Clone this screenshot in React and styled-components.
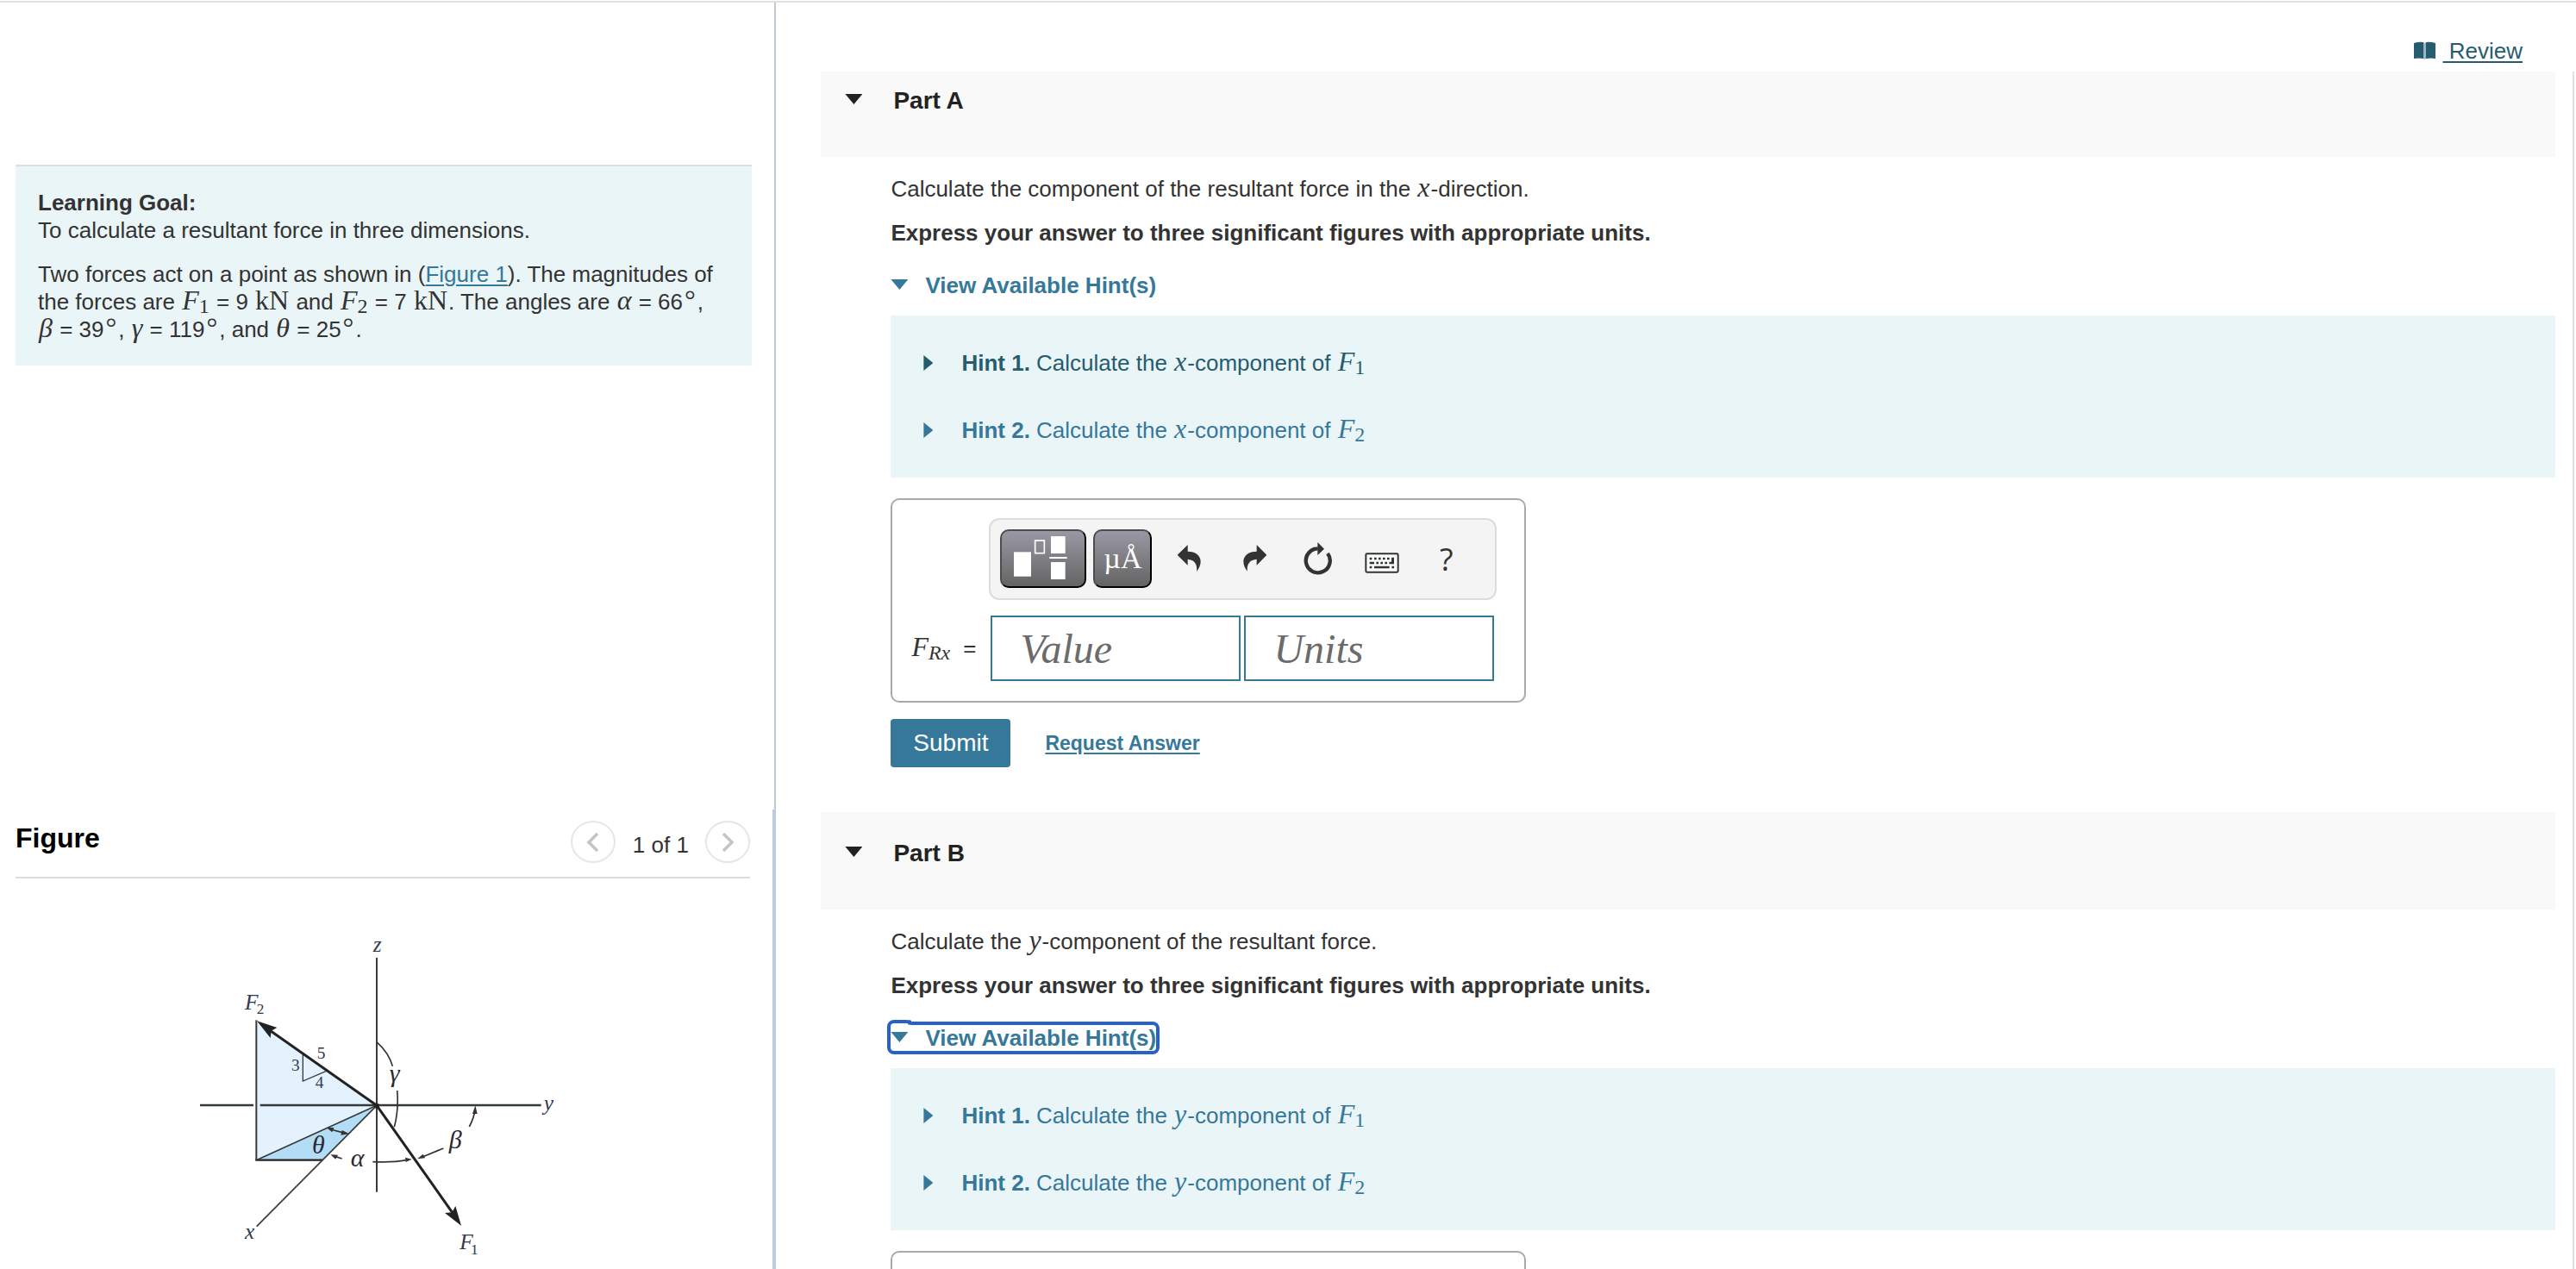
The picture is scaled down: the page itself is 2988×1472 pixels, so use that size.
import React from 'react'
import styled, { createGlobalStyle, css } from 'styled-components'

const sans = '"Liberation Sans", Arial, Helvetica, sans-serif'
const serif = '"Liberation Serif", "Times New Roman", serif'

const GlobalStyle = createGlobalStyle`
  * {
    box-sizing: border-box;
  }

  body {
    margin: 0;
    background: #ffffff;
    color: #333333;
    font-family: ${sans};
    font-size: 26px;
    line-height: 32px;
  }
`;

const Page = styled.div`
  display: grid;
  grid-template-columns: calc(30% + 4px) 1fr;
  grid-template-rows: minmax(0, 1fr);
  height: calc(100vh - 1px);
  overflow: hidden;
  border-top: 2px solid #dfe1e1;
  margin-top: 1px;
`;

const Sidebar = styled.aside`
  display: flex;
  flex-direction: column;
  min-width: 0;
`;

const GoalPane = styled.section`
  flex: 1;
  padding: 188px 26px 0 18px;
  border-right: 2px solid #c0c8cf;
`;

const GoalBox = styled.div`
  padding: 26px;
  border-top: 2px solid #dcdfe0;
  background: #eaf5f7;
`;

const Text = styled.p`
  margin: 0 0 19px;
  font-weight: ${props => (props.$bold ? 'bold' : 'normal')};

  &:last-child {
    margin-bottom: 0;
  }
`;

const Link = styled.a`
  color: #36789a;
  text-underline-offset: 3px;
  font-weight: ${props => (props.$bold ? 'bold' : 'normal')};
`;

const Math = styled.span`
  font-family: ${serif};
  font-size: 32px;
  font-style: ${props => (props.$upright ? 'normal' : 'italic')};
  line-height: 28px;
  padding: 0 1px;

  sub {
    font-size: 24px;
    font-style: ${props => (props.$italicSub ? 'italic' : 'normal')};
    line-height: 20px;
    vertical-align: -4px;
  }
`;

const Degree = styled(Math)`
  padding: 0 2px;
`;

const NoWrap = styled.span`
  white-space: nowrap;
`;

const FigurePane = styled.section`
  border-right: 4px solid #bccbdd;
  padding-left: 18px;
`;

const FigureHeader = styled.header`
  display: flex;
  align-items: flex-start;
  height: 80px;
  margin-right: 26px;
  padding-top: 13px;
  border-bottom: 2px solid #dcdcdc;
`;

const FigureTitle = styled.h2`
  flex: 1;
  margin: 0;
  color: #000000;
  font-size: 32px;
  line-height: 40px;
`;

const PagerButton = styled.button`
  display: flex;
  align-items: center;
  justify-content: center;
  width: 52px;
  height: 49px;
  padding: 0;
  border: 2px solid #e6e6e6;
  border-radius: 50%;
  background: #ffffff;
`;

const PagerText = styled.span`
  width: 104px;
  line-height: 56px;
  text-align: center;
`;

const Diagram = styled.svg`
  display: block;
  width: 460px;
  margin: 41px 0 0 182px;
  font-family: ${serif};
  font-style: italic;
`;

const Main = styled.main`
  display: flex;
  flex-direction: column;
  min-width: 0;
`;

const TopBar = styled.div`
  display: flex;
  align-items: center;
  justify-content: flex-end;
  gap: 9px;
  height: 80px;
  padding: 32px 62px 0 0;
  flex: none;
`;

const ReviewLink = styled.a`
  color: #255c70;
  text-underline-offset: 3px;
  white-space: pre;
`;

const Scroller = styled.div`
  flex: 1;
  min-height: 0;
  overflow: hidden;
  margin-right: 2px;
  padding: 0 20px 0 52px;
  border-right: 2px solid #dfdfdf;
`;

const PartHeader = styled.header`
  display: flex;
  gap: 36px;
  padding: ${props => (props.$first ? '18px' : '32px')} 28px 49px;
  background: #f9f9f9;
`;

const PartTitle = styled.h2`
  margin: 0;
  color: #222222;
  font-size: 28px;
  line-height: 32px;
`;

const PartBody = styled.div`
  padding: 21px 0 52px 81px;
`;

const Arrow = styled.span`
  display: inline-block;
  width: 20px;
  height: 12px;
  background: currentColor;
  clip-path: polygon(0 0, 100% 0, 50% 100%);
  ${props => props.$right && css`
    width: 11px;
    height: 18px;
    clip-path: polygon(0 0, 100% 50%, 0 100%);
  `}
`;

const PartArrow = styled(Arrow)`
  color: #222222;
  margin-top: 8px;
`;

const HintToggleRow = styled.div`
  padding-top: 9px;
  margin-bottom: 19px;
`;

const ArrowBox = styled.span`
  display: inline-flex;
  align-items: center;
  width: 20px;
  height: 32px;
  margin-right: 20px;
  vertical-align: 4px;
`;

const HintToggle = styled.a`
  color: #36789a;
  font-weight: bold;
  line-height: 32px;
  text-decoration: none;
  border-radius: 4px;
  ${props => props.$focused && css`
    outline: 4px solid #2660c8;
  `}
`;

const HintList = styled.ul`
  display: flex;
  flex-direction: column;
  gap: 46px;
  margin: 0 0 24px;
  padding: 39px 38px;
  background: #eaf5f7;
  list-style: none;
`;

const Hint = styled.a`
  display: flex;
  align-items: center;
  gap: 33px;
  color: ${props => (props.$active ? '#255c70' : '#36789a')};
  text-decoration: none;
`;

const AnswerBox = styled.div`
  display: grid;
  grid-template-columns: 91px auto;
  row-gap: 18px;
  width: fit-content;
  margin-bottom: 19px;
  padding: 21px 32px 23px 21px;
  border: 2px solid #a9a9a9;
  border-radius: 10px;
`;

const Toolbar = styled.div`
  grid-column: 2;
  display: flex;
  gap: 8px;
  padding: 11px 23px 12px 11px;
  border: 2px solid #dcdcdc;
  border-radius: 12px;
  background: #f4f4f4;
`;

const PaletteButton = styled.button`
  display: flex;
  align-items: center;
  justify-content: center;
  width: ${props => (props.$wide ? '100px' : '68px')};
  height: 68px;
  padding: 0;
  border: 2px solid;
  border-color: #4d4d4d #000000 #000000 #4d4d4d;
  border-radius: 10px;
  background: linear-gradient(#9a98a3, #646464);
  color: #ffffff;
  font-family: ${serif};
  font-size: 34px;
`;

const ToolButton = styled.button`
  display: flex;
  align-items: center;
  justify-content: center;
  width: 67px;
  height: 68px;
  padding: 0;
  border: 0;
  background: none;
  color: #333333;
  font-family: "Open Sans", sans-serif;
  font-size: 36px;
`;

const AnswerLabel = styled.label`
  display: flex;
  align-items: baseline;
  align-self: center;
  gap: 14px;
  white-space: nowrap;
`;

const Fields = styled.div`
  display: flex;
  gap: 4px;
  padding-left: 2px;
`;

const Field = styled.input`
  width: 290px;
  height: 76px;
  padding: 0 32px;
  border: 2px solid #36789a;
  font-family: ${serif};
  font-size: 48px;

  &::placeholder {
    color: #6b6b6b;
    font-style: italic;
    opacity: 1;
  }
`;

const Actions = styled.div`
  display: flex;
  align-items: center;
  gap: 40px;
`;

const Submit = styled.button`
  width: 139px;
  height: 56px;
  padding: 0;
  border: 0;
  border-radius: 4px;
  background: #36789a;
  color: #ffffff;
  font-family: ${sans};
  font-size: 28px;
`;

const RequestLink = styled(Link)`
  font-size: 23px;
`;

const Force = ({ n }) => <Math>F<sub>{n}</sub></Math>

const Angle = ({ name, value }) => (
  <NoWrap><Math>{name}</Math> = {value}<Degree $upright>°</Degree></NoWrap>
)

const BookIcon = () => (
  <svg width="25" height="22" viewBox="0 0 25 22" fill="#255c70" aria-hidden="true">
    <path d="M0 2Q6 0 11 1V20Q6 19 0 20Z" />
    <path d="M25 2Q19 0 14 1V20Q19 19 25 20Z" />
    <path d="M11 1L12.500 2L14 1V20L12.500 21L11 20Z" opacity="0.45" />
  </svg>
)

const Chevron = ({ right }) => (
  <svg width="24" height="30" viewBox="0 0 24 30" fill="none" stroke="#c4c4c4" strokeWidth="3.500" aria-hidden="true">
    <path d={right ? 'M7 5L17 15L7 25' : 'M17 5L7 15L17 25'} />
  </svg>
)

const TemplateIcon = () => (
  <svg width="96" height="64" viewBox="36 48 288 192" fill="#ffffff" aria-hidden="true">
    <rect x="78" y="121" width="60" height="85" />
    <rect x="152" y="81" width="32" height="44" fill="none" stroke="#ffffff" strokeWidth="5" />
    <rect x="207" y="66" width="50" height="60" />
    <rect x="202" y="138" width="61" height="6" />
    <rect x="207" y="156" width="50" height="60" />
  </svg>
)

const UndoIcon = () => (
  <svg width="48" height="48" viewBox="610 72 144 144" fill="#333333" aria-hidden="true">
    <path d="M645 131L681 96V119C708 119 726 133 726 154C726 167 720 179 712 188C714 172 712 149 681 146V167Z" />
  </svg>
)

const RedoIcon = () => (
  <svg width="48" height="48" viewBox="-34 72 144 144" fill="#333333" aria-hidden="true">
    <path d="M87 131L52 96V119C24 119 6 133 6 154C6 167 12 179 20 188C18 172 20 149 52 146V167Z" />
  </svg>
)

const ResetIcon = () => (
  <svg width="48" height="48" viewBox="190 72 144 144" aria-hidden="true">
    <path d="M298 126A42 42 0 1 1 264 109" fill="none" stroke="#333333" strokeWidth="13" />
    <path d="M263 87L286 110L263 132Z" fill="#333333" />
  </svg>
)

const KeyboardIcon = () => (
  <svg width="48" height="48" viewBox="415 72 144 144" fill="#333333" aria-hidden="true">
    <rect x="431" y="127" width="112" height="64" rx="4" fill="#fafefe" stroke="#333333" strokeWidth="6" />
    <path d="M444 140h8v8h-8zM460 140h8v8h-8zM475 140h8v8h-8zM490 140h8v8h-8zM505 140h8v8h-8z" />
    <path d="M444 155h16v8h-16zM467 155h8v8h-8zM482 155h8v8h-8zM497 155h8v8h-8zM512 155h8v-15h9v23h-17z" />
    <path d="M444 170h8v8h-8zM460 170h53v8h-53zM521 170h8v8h-8z" />
  </svg>
)

const ForceDiagram = () => (
  <Diagram viewBox="0 0 1380 1236" role="img" aria-label="Forces F1 and F2 acting at the origin">
    {/* plane of F2 and its projection on x-y */}
    <path d="M292 375L711 667L292 857Z" fill="#e3f2fc" />
    <path d="M292 857L711 667L522 857Z" fill="#b3ddf5" />

    <g fill="none" stroke="#3a3a3a" strokeWidth="6">
      <path d="M711 153V968" />
      <path d="M96 666H282M305 666H1283" stroke="#333b38" strokeWidth="7" />
      <path d="M292 370V857" />
      <path d="M289 857H522" stroke="#222222" strokeWidth="7" />
      <path d="M292 857L711 667" strokeWidth="5" />
      <path d="M711 667L293 1088" strokeWidth="5" />
      <path d="M454 486V582L534 548" strokeWidth="4" />
    </g>

    <g stroke="#222222" strokeWidth="9">
      <path d="M711 667L335 403" />
      <path d="M711 667L978 1045" />
    </g>
    <g fill="#222222">
      <path d="M294 373L364 396L344 407L341 432Z" />
      <path d="M1005 1085L948 1041L973 1039L985 1017Z" />
      <circle cx="711" cy="668" r="9" />
    </g>

    <g fill="none" stroke="#333333" strokeWidth="5">
      <path d="M713 448Q753 484 766 530" />
      <path d="M782 615Q788 682 772 742" />
      <path d="M1033 741Q1050 710 1053 680" />
      <path d="M943 816L872 845" />
      <path d="M697 863Q770 866 812 857" />
      <path d="M590 852L568 845" />
      <path d="M550 750L600 763" />
    </g>
    <g fill="#333333">
      <path d="M1054 667L1061 696L1044 696Z" />
      <path d="M852 853L872 836L879 850Z" />
      <path d="M833 854L810 848L812 864Z" />
      <path d="M550 838L576 839L568 854Z" />
      <path d="M536 744L562 744L556 760Z" />
      <path d="M616 766L590 753L586 770Z" />
    </g>

    <g fill="#333a4d" fontSize="76">
      <text x="698" y="131">z</text>
      <text x="1292" y="684">y</text>
      <text x="252" y="1130">x</text>
      <text x="252" y="332">F</text>
      <text x="1000" y="1166">F</text>
      <g fontSize="52" fontStyle="normal">
        <text x="293" y="349">2</text>
        <text x="1038" y="1184">1</text>
      </g>
      <g fontSize="58" fontStyle="normal">
        <text x="503" y="505">5</text>
        <text x="414" y="547">3</text>
        <text x="497" y="607">4</text>
      </g>
      <g fontSize="90" fill="#2a2a33">
        <text x="486" y="835">θ</text>
        <text x="620" y="878">α</text>
        <text x="962" y="815">β</text>
        <text x="755" y="586">γ</text>
      </g>
    </g>
  </Diagram>
)

const Answer = ({ id, axis }) => (
  <AnswerBox>
    <Toolbar>
      <PaletteButton $wide aria-label="Templates"><TemplateIcon /></PaletteButton>
      <PaletteButton>µÅ</PaletteButton>
      <ToolButton aria-label="Undo"><UndoIcon /></ToolButton>
      <ToolButton aria-label="Redo"><RedoIcon /></ToolButton>
      <ToolButton aria-label="Reset"><ResetIcon /></ToolButton>
      <ToolButton aria-label="Keyboard shortcuts"><KeyboardIcon /></ToolButton>
      <ToolButton>?</ToolButton>
    </Toolbar>
    <AnswerLabel htmlFor={id}><Math $italicSub>F<sub>R{axis}</sub></Math> =</AnswerLabel>
    <Fields>
      <Field id={id} placeholder="Value" />
      <Field placeholder="Units" aria-label="Units" />
    </Fields>
  </AnswerBox>
)

const Part = ({ name, axis, first, activeHint, focused, children }) => (
  <section>
    <PartHeader $first={first}>
      <PartArrow />
      <PartTitle>Part {name}</PartTitle>
    </PartHeader>
    <PartBody>
      <Text>{children}</Text>
      <Text $bold>Express your answer to three significant figures with appropriate units.</Text>
      <HintToggleRow>
        <HintToggle href="#hints" $focused={focused}>
          <ArrowBox><Arrow /></ArrowBox>View Available Hint(s)
        </HintToggle>
      </HintToggleRow>
      <HintList>
        {[1, 2].map(n => (
          <li key={n}>
            <Hint href="#hint" $active={activeHint === n}>
              <Arrow $right />
              <span><b>Hint {n}.</b> Calculate the <Math>{axis}</Math>-component of <Force n={n} /></span>
            </Hint>
          </li>
        ))}
      </HintList>
      <Answer id={`answer-${name}`} axis={axis} />
      <Actions>
        <Submit>Submit</Submit>
        <RequestLink href="#answer" $bold>Request Answer</RequestLink>
      </Actions>
    </PartBody>
  </section>
)

export default function App() {
  return (
    <>
      <GlobalStyle />
      <Page>
        <Sidebar>
          <GoalPane>
            <GoalBox>
              <Text>
                <b>Learning Goal:</b><br />
                To calculate a resultant force in three dimensions.
              </Text>
              <Text>
                Two forces act on a point as shown in (<Link href="#figure">Figure 1</Link>). The magnitudes of
                the forces are <Force n={1} /> = 9 <Math $upright>kN</Math> and <Force n={2} /> = 7 <Math $upright>kN</Math>.
                The angles are <Angle name="α" value={66} />, <Angle name="β" value={39} />
                , <Angle name="γ" value={119} />, and <Angle name="θ" value={25} />.
              </Text>
            </GoalBox>
          </GoalPane>
          <FigurePane id="figure">
            <FigureHeader>
              <FigureTitle>Figure</FigureTitle>
              <PagerButton aria-label="Previous figure"><Chevron /></PagerButton>
              <PagerText>1 of 1</PagerText>
              <PagerButton aria-label="Next figure"><Chevron right /></PagerButton>
            </FigureHeader>
            <ForceDiagram />
          </FigurePane>
        </Sidebar>
        <Main>
          <TopBar>
            <BookIcon />
            <ReviewLink href="#review"> Review</ReviewLink>
          </TopBar>
          <Scroller>
            <Part name="A" axis="x" first activeHint={1}>
              Calculate the component of the resultant force in the <Math>x</Math>-direction.
            </Part>
            <Part name="B" axis="y" focused>
              Calculate the <Math>y</Math>-component of the resultant force.
            </Part>
          </Scroller>
        </Main>
      </Page>
    </>
  )
}
